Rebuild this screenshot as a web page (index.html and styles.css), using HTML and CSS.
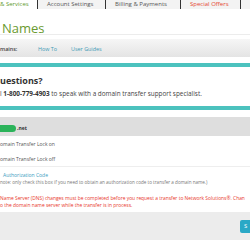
FILE: index.html
```html
<!DOCTYPE html>
<html>
<head>
<meta charset="utf-8">
<link rel="stylesheet" href="styles.css">
</head>
<body>
<div class="page">
  <div class="tabs">
    <div class="tab tab-active">&amp; Services</div>
    <div class="tab">Account Settings</div>
    <div class="tab">Billing &amp; Payments</div>
    <div class="tab tab-offers">Special Offers</div>
    <div class="tab tab-rest"></div>
  </div>
  <h1 class="title">Names</h1>
  <div class="subnav">
    <span class="subnav-label">mains:</span>
    <a class="subnav-link">How To</a>
    <a class="subnav-link">User Guides</a>
  </div>
  <div class="questions">
    <h2 class="q-title">uestions?</h2>
    <p class="q-text">l <b>1-800-779-4903</b> to speak with a domain transfer support specialist.</p>
  </div>
  <div class="row-head"><span class="scribble"></span><b>.net</b></div>
  <div class="option">omain Transfer Lock on</div>
  <div class="option option-last">omain Transfer Lock off</div>
  <div class="auth">
    <div class="auth-title">Authorization Code</div>
    <div class="auth-note">note: only check this box if you need to obtain an authorization code to transfer a domain name.)</div>
  </div>
  <div class="warning">Name Server (DNS) changes must be completed before you request a transfer to Network Solutions®. Chan<br>o the domain name server while the transfer is in process.</div>
  <div class="footer">
    <span class="btn">S</span>
  </div>
</div>
</body>
</html>
```

FILE: styles.css
```css
* { box-sizing: border-box; }
html, body { margin: 0; padding: 0; background: #fff; }
body { font-family: "Open Sans", "DejaVu Sans", sans-serif; color: #333; overflow: hidden; width: 250px; height: 250px; }
.page { width: 250px; }

.tabs { display: flex; height: 10px; }
.tab { font-size: 6px; line-height: 9px; color: #555; background: #f3f3f3; border-left: 1px solid #333; padding-left: 9px; height: 9px; white-space: nowrap; }
.tab-active { background: #fff; color: #5f9a2e; border-left: none; padding-left: 0; width: 37px; }
.tab:nth-child(2) { width: 68px; }
.tab:nth-child(3) { width: 75px; }
.tab-offers { width: 60px; color: #e5472f; }
.tab-rest { flex: 1; }

.title { margin: 0; padding: 8px 0 0 2px; height: 25px; font-size: 13px; line-height: 20px; font-weight: 400; color: #6a9a2f; border-bottom: 1px solid #ececec; }

.subnav { margin-top: 4px; height: 18px; display: flex; align-items: center; background: linear-gradient(#f6f6f6, #e4e4e4); font-size: 5.4px; padding-top: 2px; }
.subnav-label { color: #444; font-weight: 600; width: 38px; }
.subnav-link { color: #3f9ab5; margin-right: 14px; }

.questions { margin-top: 6px; border-top: 4px solid #4cc2be; border-bottom: 4px solid #4cc2be; padding: 8px 0 0 0; height: 47px; }
.q-title { margin: 0; font-size: 9px; line-height: 12px; font-weight: 700; color: #333; }
.q-text { margin: 1.5px 0 0 0; font-size: 6.4px; line-height: 9px; color: #444; }
.q-text b { font-weight: 700; color: #333; }

.row-head { margin-top: 7px; height: 19px; background: #dedede; display: flex; align-items: center; padding-top: 3px; font-size: 5px; color: #333; }
.scribble { display: inline-block; width: 16px; height: 7px; background: #2bb35a; border-radius: 0 4px 4px 0; margin-right: 1px; }
.option { height: 16px; display: flex; align-items: center; font-size: 5px; color: #555; }
.option-last { border-bottom: 1px solid #eee; height: 15px; }
.auth { padding: 5px 0 0 3px; }
.auth-title { font-size: 5px; line-height: 7px; color: #3a9cc0; }
.auth-note { font-size: 4.6px; line-height: 7px; color: #777; margin-left: -3px; white-space: nowrap; }
.warning { margin-top: 8.5px; font-size: 4.9px; line-height: 7px; color: #e8382c; white-space: nowrap; }
.footer { margin-top: 3.5px; height: 28px; background: #ececec; display: flex; justify-content: flex-end; align-items: center; }
.btn { width: 10px; height: 13px; background: #2aa8c6; border-radius: 2px 0 0 2px; color: #fff; font-size: 6px; line-height: 13px; padding-left: 4px; overflow: hidden; white-space: nowrap; }
```
